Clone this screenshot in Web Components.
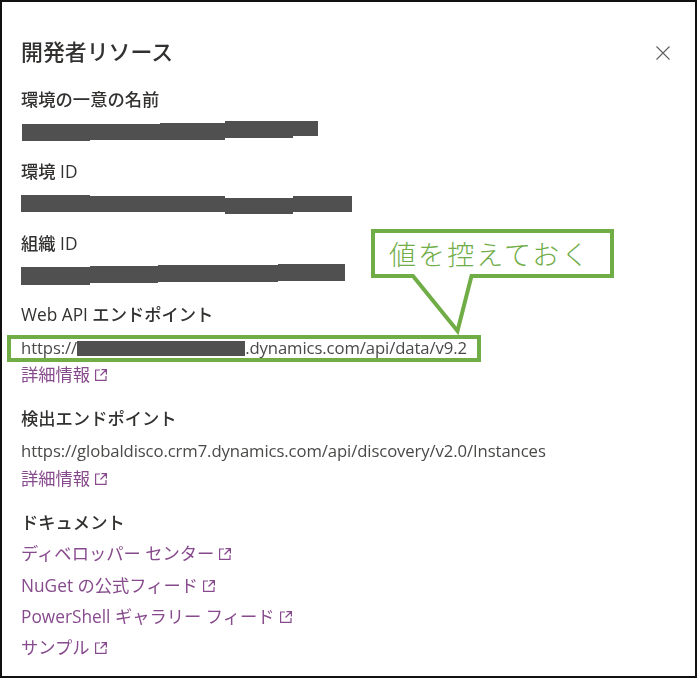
<!DOCTYPE html>
<html lang="ja">
<head>
<meta charset="utf-8">
<title>開発者リソース</title>
<style>
  html, body { margin: 0; background: #fff; }
  body {
    font-family: "Open Sans", "Noto Sans CJK JP", sans-serif;
    color: #323130;
  }
</style>
</head>
<body>
<dev-panel>
  <span slot="title">開発者リソース</span>

  <info-section heading="環境の一意の名前" style="--top: 21px">
    <redact-bar segs="1:0:0,68:4:17,70:4:16,65:3:17,68:1:17,25:1:15"></redact-bar>
  </info-section>

  <info-section heading="環境 ID" style="--top: 16px">
    <redact-bar segs="69:3:17,70:4:16,65:4:16,68:6:16,59:4:16"></redact-bar>
  </info-section>

  <info-section heading="組織 ID" style="--top: 16px">
    <redact-bar segs="69:3:18,68:2:17,68:1:17,52:1:17,67:0:17"></redact-bar>
  </info-section>

  <info-section heading="Web API エンドポイント" style="--top: 15px; --value-top: 9px; --link-top: 3px">
    <value-text>https://<redact-bar inline segs="168:5:15"></redact-bar>.dynamics.com/api/data/v9.2</value-text>
    <ext-link>詳細情報</ext-link>
  </info-section>

  <info-section heading="検出エンドポイント" style="--top: 20px; --link-top: 4px">
    <value-text>https://globaldisco.crm7.dynamics.com/api/discovery/v2.0/Instances</value-text>
    <ext-link>詳細情報</ext-link>
  </info-section>

  <info-section heading="ドキュメント" style="--top: 20px; --value-top: 0px; --link-top: 7.3px">
    <ext-link>ディベロッパー センター</ext-link>
    <ext-link>NuGet の公式フィード</ext-link>
    <ext-link>PowerShell ギャラリー フィード</ext-link>
    <ext-link>サンプル</ext-link>
  </info-section>

  <note-callout slot="overlay">値を控えておく</note-callout>
</dev-panel>

<script>
class DevPanel extends HTMLElement {
    connectedCallback() {
        const shadow = this.attachShadow({ mode: 'open' });
        shadow.innerHTML = `
            <style>
                :host {
                    display: block;
                    position: relative;
                    box-sizing: border-box;
                    width: 697px;
                    height: 678px;
                    border: 2px solid #111;
                    background: #fff;
                    overflow: hidden;
                }

                .body {
                    display: flex;
                    flex-direction: column;
                    padding: 33px 19px 0;
                    filter: blur(0.4px);
                }

                header {
                    display: flex;
                    justify-content: space-between;
                    align-items: center;
                    height: 32px;
                }

                h1 {
                    margin: 0;
                    font: 500 21.9px/32px "Noto Sans CJK JP", sans-serif;
                    color: #323130;
                }

                svg {
                    display: block;
                    width: 14px;
                    height: 14px;
                    margin: 3px 6px 0 0;
                }
            </style>
            <div class="body">
                <header>
                    <h1><slot name="title"></slot></h1>
                    <svg viewBox="0 0 14 14" aria-label="閉じる">
                        <path d="M.5.5l13 13M13.5.5l-13 13" stroke="#605e5c" stroke-width="1.1" fill="none"/>
                    </svg>
                </header>
                <slot></slot>
            </div>
            <slot name="overlay"></slot>
        `;
    }
}

class InfoSection extends HTMLElement {
    connectedCallback() {
        const shadow = this.attachShadow({ mode: 'open' });
        shadow.innerHTML = `
            <style>
                :host {
                    display: block;
                    margin-top: var(--top, 16px);
                }

                h2 {
                    margin: 0 0 var(--value-top, 8px);
                    font: 500 17.3px/24px "Open Sans", "Noto Sans CJK JP", sans-serif;
                    color: #323130;
                }
            </style>
            <h2>${this.getAttribute('heading')}</h2>
            <slot></slot>
        `;
    }
}

// blurred blocks that hide a value; segs = width:top:height
class RedactBar extends HTMLElement {
    connectedCallback() {
        const shadow = this.attachShadow({ mode: 'open' });
        const blocks = this.getAttribute('segs').split(',').map(seg => {
            const [w, top, h] = seg.split(':');
            return `<i style="width:${w}px;height:${h}px;margin-top:${top}px"></i>`;
        }).join('');
        shadow.innerHTML = `
            <style>
                :host {
                    display: flex;
                    height: 24px;
                    filter: blur(0.7px);
                }

                :host([inline]) {
                    display: inline-flex;
                    vertical-align: top;
                }

                i {
                    display: block;
                    background: #505050;
                }
            </style>
            ${blocks}
        `;
    }
}

class ValueText extends HTMLElement {
    connectedCallback() {
        const shadow = this.attachShadow({ mode: 'open' });
        shadow.innerHTML = `
            <style>
                :host {
                    display: block;
                    height: 24px;
                    font: 400 16.7px/24px "Open Sans", sans-serif;
                    letter-spacing: -0.1px;
                    white-space: nowrap;
                    color: #4a4948;
                }
            </style>
            <slot></slot>
        `;
    }
}

class ExtLink extends HTMLElement {
    connectedCallback() {
        const shadow = this.attachShadow({ mode: 'open' });
        shadow.innerHTML = `
            <style>
                :host {
                    display: block;
                    margin-top: var(--link-top, 3px);
                }

                a {
                    display: inline-flex;
                    align-items: center;
                    gap: 5px;
                    height: 24px;
                    font: 400 17.3px/24px "Open Sans", "Noto Sans CJK JP", sans-serif;
                    color: #874a8d;
                    white-space: nowrap;
                }

                svg {
                    width: 12px;
                    height: 12px;
                    flex: none;
                }
            </style>
            <a>
                <slot></slot>
                <svg viewBox="0 0 12 12" fill="none" stroke="currentColor" stroke-width="1.2">
                    <path d="M5 1H.6v10.400H11V7M6.500 .6H11.400V5.500M11 1L5.500 6.500"/>
                </svg>
            </a>
        `;
    }
}

class NoteCallout extends HTMLElement {
    connectedCallback() {
        const shadow = this.attachShadow({ mode: 'open' });
        shadow.innerHTML = `
            <style>
                :host {
                    position: absolute;
                    left: -2px;
                    top: -2px;
                    width: 697px;
                    height: 678px;
                    pointer-events: none;
                }

                svg {
                    position: absolute;
                    inset: 0;
                }

                .text {
                    position: absolute;
                    left: 389px;
                    top: 234px;
                    height: 40px;
                    font: 300 27px/40px "Noto Sans CJK JP", sans-serif;
                    letter-spacing: 2.1px;
                    color: #70ad47;
                    white-space: nowrap;
                }
            </style>
            <svg width="697" height="678" fill="none" stroke="#70ad47" stroke-width="4">
                <rect x="9" y="337" width="470" height="23"/>
                <path fill="#fff" d="M373 231H612V276H471.500L457.500 331L413 276H373Z"/>
            </svg>
            <div class="text"><slot></slot></div>
        `;
    }
}

customElements.define('dev-panel', DevPanel);
customElements.define('info-section', InfoSection);
customElements.define('redact-bar', RedactBar);
customElements.define('value-text', ValueText);
customElements.define('ext-link', ExtLink);
customElements.define('note-callout', NoteCallout);
</script>
</body>
</html>
